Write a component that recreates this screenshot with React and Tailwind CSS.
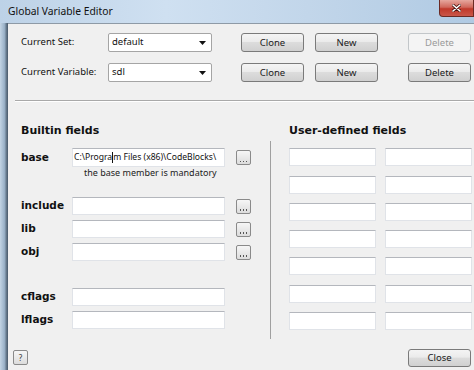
import React from "react";

const font = { fontFamily: '"Noto Sans", "Open Sans", sans-serif' };

function Btn({ children, w = "w-[63px]", h = "h-[19px]", disabled = false }) {
  return (
    <div
      className={`${w} ${h} shrink-0 flex items-center justify-center rounded-[3px] border text-[9.5px] leading-none ${
        disabled
          ? "border-[#c2c6c9] bg-[#f4f4f4] text-[#9a9a9a]"
          : "border-[#7a7a7a] bg-[linear-gradient(#f4f4f4_0%,#ebebeb_45%,#dcdcdc_50%,#d0d0d0_100%)] text-[#1a1a1a]"
      }`}
    >
      {children}
    </div>
  );
}

function Dots() {
  return (
    <div className="w-[15px] h-[15px] shrink-0 rounded-[2px] border border-[#8a8a8a] bg-[linear-gradient(#f6f6f6,#dcdcdc)] flex items-end justify-center pb-[2px]">
      <div className="flex gap-[1.5px]">
        <span className="w-[1.5px] h-[1.5px] bg-[#555]" />
        <span className="w-[1.5px] h-[1.5px] bg-[#555]" />
        <span className="w-[1.5px] h-[1.5px] bg-[#555]" />
      </div>
    </div>
  );
}

function Field({ w = "w-[153px]", h = "h-[18px]", text = "text-[9.5px]", children }) {
  return (
    <div
      className={`${w} ${h} ${text} shrink-0 bg-white border border-[#e0e3e8] border-t-[#b4b7bd] overflow-hidden whitespace-nowrap flex items-center pl-[1px] text-[#111]`}
    >
      {children}
    </div>
  );
}

function Combo({ text }) {
  return (
    <div className="w-[104px] h-[19px] shrink-0 rounded-[2px] border border-[#a5a5a5] bg-white flex items-center pl-[3px] pr-[5px] text-[9.5px] text-[#111]">
      <span className="flex-1">{text}</span>
      <svg width="7" height="4" viewBox="0 0 7 4">
        <path d="M0 0 H7 L3.5 4 Z" fill="#111" />
      </svg>
    </div>
  );
}

function LeftRow({ label, mt, dots = false }) {
  return (
    <div className={`flex items-center h-[18px] ${mt}`}>
      <div className="w-[51px] text-[10.5px] font-bold text-[#111]" style={{ fontFamily: '"DejaVu Sans", sans-serif' }}>
        {label}
      </div>
      <Field />
      {dots && (
        <div className="ml-[11px]">
          <Dots />
        </div>
      )}
    </div>
  );
}

export default function App() {
  const rightTops = ["mt-[10px]", "mt-[10px]", "mt-[9px]", "mt-[9px]", "mt-[9px]", "mt-[10px]", "mt-[9px]"];
  return (
    <div className="w-[474px] h-[370px] overflow-hidden flex flex-col bg-[#b8cde2]" style={font}>
      {/* Title bar */}
      <div className="h-[23px] shrink-0 flex items-start bg-[linear-gradient(90deg,#bdd2e7_0%,#cfe0f1_35%,#c2d6ea_65%,#b0cae3_100%)]">
        <div className="flex-1 pl-[8px] pt-[4px] text-[10.3px] text-[#111] leading-[14px]">Global Variable Editor</div>
        <div className="w-[35px] h-[17px] rounded-bl-[4px] border border-t-0 border-[#6b2a24] bg-[linear-gradient(#e6a79e_0%,#d0685c_45%,#c0392b_55%,#c9574a_100%)] flex items-center justify-center">
          <svg width="9" height="8" viewBox="0 0 9 8">
            <path d="M1 1 L8 7 M8 1 L1 7" stroke="#4a1510" strokeWidth="3" strokeLinecap="round" />
            <path d="M1 1 L8 7 M8 1 L1 7" stroke="#fff" strokeWidth="1.6" strokeLinecap="round" />
          </svg>
        </div>
      </div>

      <div className="flex flex-1">
        {/* left window frame */}
        <div className="w-[8px] shrink-0 bg-[linear-gradient(90deg,#c3d4e4_0%,#9bb2c8_55%,#5c6e80_85%,#4a5a6a_100%)]" />

        {/* client */}
        <div className="flex-1 flex flex-col bg-[#f0f0f0] border-t border-[#8e9aa6]">
          {/* top section */}
          <div className="flex flex-col pl-[13px]">
            <div className="flex items-center h-[19px] mt-[9px]">
              <div className="w-[87px] text-[9.5px] text-[#111]">Current Set:</div>
              <Combo text="default" />
              <div className="ml-[29px]"><Btn>Clone</Btn></div>
              <div className="ml-[11px]"><Btn>New</Btn></div>
              <div className="ml-[30px]"><Btn disabled>Delete</Btn></div>
            </div>
            <div className="flex items-center h-[19px] mt-[11px]">
              <div className="w-[87px] text-[9.5px] text-[#111]">Current Variable:</div>
              <Combo text="sdl" />
              <div className="ml-[29px]"><Btn>Clone</Btn></div>
              <div className="ml-[11px]"><Btn>New</Btn></div>
              <div className="ml-[30px]"><Btn>Delete</Btn></div>
            </div>
          </div>

          {/* separator */}
          <div className="ml-[7px] mt-[18px] h-[2px] border-t border-[#a9a9a9] border-b border-b-white" />

          {/* lower section */}
          <div className="flex">
            {/* builtin */}
            <div className="w-[262px] shrink-0 pl-[13px] flex flex-col">
              <div className="mt-[22px] h-[14px] leading-[14px] text-[11px] font-bold text-[#111]" style={{ fontFamily: '"DejaVu Sans", sans-serif' }}>
                Builtin fields
              </div>
              <div className="flex items-center h-[19px] mt-[10px]">
                <div className="w-[51px] text-[10.5px] font-bold text-[#111]" style={{ fontFamily: '"DejaVu Sans", sans-serif' }}>
                  base
                </div>
                <Field h="h-[19px]" text="text-[8.6px]">
                  <span>C:\Progra</span>
                  <span className="inline-block w-px h-[11px] bg-[#111]" />
                  <span>m Files (x86)\CodeBlocks\</span>
                </Field>
                <div className="ml-[11px]">
                  <Dots />
                </div>
              </div>
              <div className="h-[12px] leading-[12px] pl-[63px] text-[9px] text-[#222]">the base member is mandatory</div>
              <LeftRow label="include" mt="mt-[18px]" dots />
              <LeftRow label="lib" mt="mt-[5px]" dots />
              <LeftRow label="obj" mt="mt-[5px]" dots />
              <LeftRow label="cflags" mt="mt-[27px]" />
              <LeftRow label="lflags" mt="mt-[5px]" />
            </div>

            {/* divider */}
            <div className="w-px shrink-0 mt-[39px] h-[198px] bg-[#a0a0a0]" />

            {/* user-defined */}
            <div className="flex-1 pl-[18px] flex flex-col">
              <div className="mt-[22px] h-[14px] leading-[14px] text-[11px] font-bold text-[#111] whitespace-nowrap" style={{ fontFamily: '"DejaVu Sans", sans-serif' }}>
                User-defined fields
              </div>
              {rightTops.map((m, i) => (
                <div key={i} className={`flex gap-[9px] ${m}`}>
                  <Field w="w-[87px]" />
                  <Field w="w-[87px]" />
                </div>
              ))}
            </div>
          </div>

          {/* bottom row */}
          <div className="flex items-start mt-[10px] pl-[5px]">
            <div className="mt-[1px] w-[15px] h-[15px] rounded-[2px] border border-[#8a8a8a] bg-[linear-gradient(#f6f6f6,#dcdcdc)] flex items-center justify-center text-[8px] text-[#333]">
              ?
            </div>
            <div className="ml-auto mr-[3px]">
              <Btn h="h-[18px]">Close</Btn>
            </div>
          </div>
        </div>
      </div>
    </div>
  );
}
